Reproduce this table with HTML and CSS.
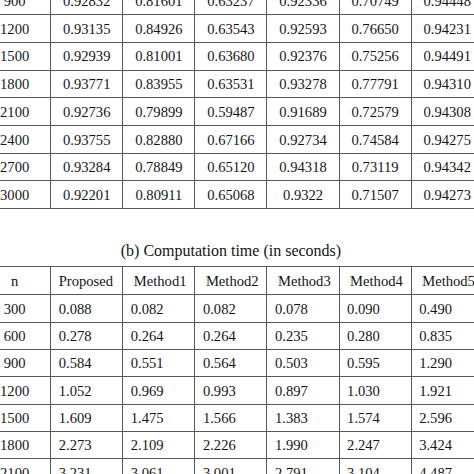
FILE: index.html
```html
<!DOCTYPE html>
<html>
<head>
<meta charset="utf-8">
<link rel="stylesheet" href="styles.css">
</head>
<body>
<div class="page">
  <div class="grid grid-a">
    <div class="c">900</div><div class="c">0.92832</div><div class="c">0.81601</div><div class="c">0.63237</div><div class="c">0.92336</div><div class="c">0.70749</div><div class="c">0.94448</div>
    <div class="c">1200</div><div class="c">0.93135</div><div class="c">0.84926</div><div class="c">0.63543</div><div class="c">0.92593</div><div class="c">0.76650</div><div class="c">0.94231</div>
    <div class="c">1500</div><div class="c">0.92939</div><div class="c">0.81001</div><div class="c">0.63680</div><div class="c">0.92376</div><div class="c">0.75256</div><div class="c">0.94491</div>
    <div class="c">1800</div><div class="c">0.93771</div><div class="c">0.83955</div><div class="c">0.63531</div><div class="c">0.93278</div><div class="c">0.77791</div><div class="c">0.94310</div>
    <div class="c">2100</div><div class="c">0.92736</div><div class="c">0.79899</div><div class="c">0.59487</div><div class="c">0.91689</div><div class="c">0.72579</div><div class="c">0.94308</div>
    <div class="c">2400</div><div class="c">0.93755</div><div class="c">0.82880</div><div class="c">0.67166</div><div class="c">0.92734</div><div class="c">0.74584</div><div class="c">0.94275</div>
    <div class="c">2700</div><div class="c">0.93284</div><div class="c">0.78849</div><div class="c">0.65120</div><div class="c">0.94318</div><div class="c">0.73119</div><div class="c">0.94342</div>
    <div class="c">3000</div><div class="c">0.92201</div><div class="c">0.80911</div><div class="c">0.65068</div><div class="c">0.9322</div><div class="c">0.71507</div><div class="c">0.94273</div>
  </div>

  <div class="caption">(b) Computation time (in seconds)</div>

  <div class="grid grid-b">
    <div class="c h first">n</div><div class="c h prop">Proposed</div><div class="c h">Method1</div><div class="c h">Method2</div><div class="c h">Method3</div><div class="c h">Method4</div><div class="c h">Method5</div>
    <div class="c first">300</div><div class="c">0.088</div><div class="c">0.082</div><div class="c">0.082</div><div class="c">0.078</div><div class="c">0.090</div><div class="c">0.490</div>
    <div class="c first">600</div><div class="c">0.278</div><div class="c">0.264</div><div class="c">0.264</div><div class="c">0.235</div><div class="c">0.280</div><div class="c">0.835</div>
    <div class="c first">900</div><div class="c">0.584</div><div class="c">0.551</div><div class="c">0.564</div><div class="c">0.503</div><div class="c">0.595</div><div class="c">1.290</div>
    <div class="c first">1200</div><div class="c">1.052</div><div class="c">0.969</div><div class="c">0.993</div><div class="c">0.897</div><div class="c">1.030</div><div class="c">1.921</div>
    <div class="c first">1500</div><div class="c">1.609</div><div class="c">1.475</div><div class="c">1.566</div><div class="c">1.383</div><div class="c">1.574</div><div class="c">2.596</div>
    <div class="c first">1800</div><div class="c">2.273</div><div class="c">2.109</div><div class="c">2.226</div><div class="c">1.990</div><div class="c">2.247</div><div class="c">3.424</div>
    <div class="c first">2100</div><div class="c">3.231</div><div class="c">3.061</div><div class="c">3.001</div><div class="c">2.791</div><div class="c">3.104</div><div class="c">4.487</div>
  </div>
</div>
</body>
</html>
```
FILE: styles.css
```css
html, body {
  margin: 0;
  padding: 0;
  background: #ffffff;
}
body {
  width: 474px;
  height: 474px;
  overflow: hidden;
  font-family: "Liberation Serif", "Times New Roman", serif;
  color: #141414;
}
.page {
  width: 505.7px;
  margin-left: -21.9px;
  padding-top: 0.1px;
}
.grid {
  display: grid;
  grid-template-columns: repeat(7, 71.1px);
  gap: 1px;
  padding: 1px;
  background: #585858;
}
.grid-a {
  margin-top: -13.6px;
  grid-auto-rows: 26.71px;
}
.grid-b {
  margin-top: 4.4px;
  grid-template-rows: 27.7px;
  grid-auto-rows: 26.33px;
}
.c {
  background: #ffffff;
  display: flex;
  align-items: center;
  font-size: 14.6px;
  line-height: 1;
  padding-top: 1px;
  box-sizing: border-box;
  white-space: nowrap;
}
.grid-a .c {
  justify-content: center;
}
.grid-b .c {
  justify-content: flex-start;
  padding-left: 7.5px;
}
.grid-b .c.h {
  padding-left: 10.5px;
}
.grid-b .c.h.prop {
  padding-left: 7.5px;
}
.grid-b .c.first {
  justify-content: center;
  padding-left: 0;
}
.caption {
  margin-top: 32.2px;
  text-align: center;
  font-size: 16px;
  line-height: 20px;
  height: 20px;
}
```
